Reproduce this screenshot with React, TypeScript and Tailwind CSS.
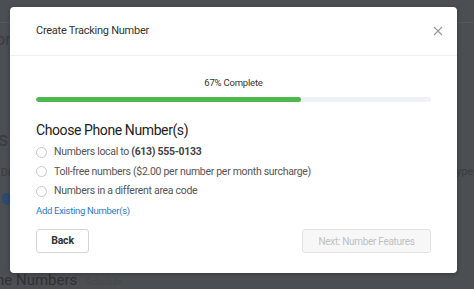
import React from "react";

export default function App() {
  const font = { fontFamily: "Roboto, 'Noto Sans', sans-serif" };
  return (
    <div className="relative w-[474px] h-[289px] overflow-hidden bg-[#4b4e52]" style={font}>
      {/* faint background page */}
      <div className="absolute left-0 top-[22px] w-full h-px bg-[#55585c]" />
      <div className="absolute left-[-4px] top-[28px] text-[16px] text-[#3a3c3f]">or</div>
      <div className="absolute left-[-2px] top-[124px] text-[20px] text-[#3a3c3f]">s</div>
      <div className="absolute left-[1px] top-[165px] text-[10px] text-[#3a3c3f]">De</div>
      <div className="absolute left-[2px] top-[193px] w-[10px] h-[12px] rounded-full bg-[#2d4a70]" />
      <div className="absolute left-[456px] top-[164px] text-[11px] text-[#3a3c3f]">ype</div>
      <div className="absolute left-[-4px] top-[269px] text-[15px] text-[#2f3134] flex items-baseline gap-2">
        <span>ne Numbers</span>
        <span className="text-[9px] text-[#45484b]">Schedule</span>
      </div>

      {/* modal */}
      <div className="absolute left-[10px] top-[7px] w-[447px] h-[266px] bg-white rounded-[4px] flex flex-col shadow-[0_1px_4px_rgba(0,0,0,0.3)]">
        <div className="h-[49px] border-b border-[#eef0f2] flex items-center justify-between pl-[26px] pr-[13px]">
          <span className="text-[11px] tracking-[-0.25px] text-[#333] pt-[1px]">Create Tracking Number</span>
          <svg width="10" height="10" viewBox="0 0 10 10" className="mr-[1px]">
            <path d="M1 1 L9 9 M9 1 L1 9" stroke="#9a9a9a" strokeWidth="1.1" />
          </svg>
        </div>
        <div className="px-[26px] flex flex-col">
          <div className="text-center text-[9.5px] tracking-[-0.2px] text-[#333] mt-[21px] leading-[12px]">67% Complete</div>
          <div className="mt-[8px] h-[5px] rounded-full bg-[#eef2f7] overflow-hidden">
            <div className="h-full bg-[#4db94d] rounded-full" style={{ width: "67%" }} />
          </div>
          <div className="mt-[19px] text-[14px] tracking-[-0.4px] leading-[18px] text-[#222]">Choose Phone Number(s)</div>
          <div className="mt-[6px] flex flex-col gap-[5.5px] text-[10.5px] tracking-[-0.3px] text-[#555] leading-[14px]">
            <label className="flex items-center gap-[7px]">
              <span className="w-[11px] h-[11px] rounded-full border border-[#c8c8c8] bg-white" />
              <span>Numbers local to <b className="font-bold text-[#444]">(613) 555-0133</b></span>
            </label>
            <label className="flex items-center gap-[7px]">
              <span className="w-[11px] h-[11px] rounded-full border border-[#c8c8c8] bg-white" />
              <span>Toll-free numbers ($2.00 per number per month surcharge)</span>
            </label>
            <label className="flex items-center gap-[7px]">
              <span className="w-[11px] h-[11px] rounded-full border border-[#c8c8c8] bg-white" />
              <span>Numbers in a different area code</span>
            </label>
          </div>
          <div className="mt-[6px] text-[9.5px] tracking-[-0.3px] leading-[13px] text-[#2b7bbd]">Add Existing Number(s)</div>
          <div className="mt-[12px] flex justify-between">
            <button className="w-[53px] h-[24px] border border-[#d4d4d4] rounded-[3px] bg-white text-[10.5px] tracking-[-0.2px] font-bold text-[#333]">Back</button>
            <button className="w-[129px] h-[24px] border border-[#e2e2e2] rounded-[3px] bg-[#f7f7f7] text-[10px] tracking-[-0.3px] text-[#c0c0c0]">Next: Number Features</button>
          </div>
        </div>
      </div>
    </div>
  );
}
